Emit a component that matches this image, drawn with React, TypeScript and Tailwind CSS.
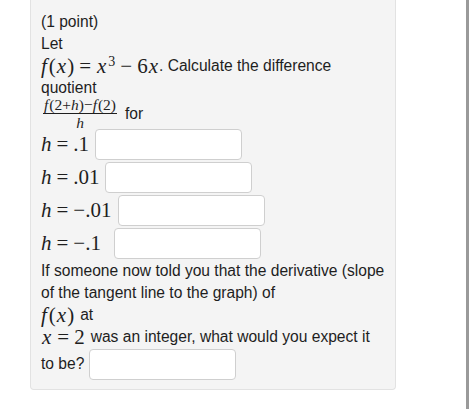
import React from "react";

const M = ({ children }: { children: React.ReactNode }) => (
  <span className="whitespace-nowrap font-['Liberation_Serif',serif] text-[21px] leading-none">{children}</span>
);
const I = ({ children }: { children: React.ReactNode }) => <i className="italic">{children}</i>;
const F = () => <i className="mr-[2px] italic">f</i>;
const X = () => <i className="mx-[1px] italic">x</i>;
const Op = ({ children }: { children: React.ReactNode }) => <span className="mx-[5px]">{children}</span>;

const Box = ({ className = "" }: { className?: string }) => (
  <div className={"h-[31px] w-[147px] shrink-0 rounded-[4px] border border-[#cfcfcf] bg-white " + className} />
);

export default function App() {
  return (
    <div className="flex h-[409px] w-[474px] bg-white font-['Liberation_Sans',Arial,sans-serif] text-[15.6px] text-[#1e1e1e]">
      <div className="ml-[30px] w-[366px] shrink-0 self-start">
        <div className="h-[390px] whitespace-nowrap rounded-b-[4px] border border-t-0 border-[#e2e2e2] bg-[#f4f4f4] px-[10px] pt-[11px]">
          <div className="h-[22px] leading-[22px]">(1 point)</div>
          <div className="h-[22px] leading-[22px]">Let</div>
          <div className="flex h-[22px] items-center leading-[22px]">
            <M>
              <F />(<X />)<Op>=</Op>
              <X />
              <sup className="ml-[1px] text-[14px]">3</sup>
              <Op>−</Op>6<X />
            </M>
            <span>. Calculate the difference</span>
          </div>
          <div className="h-[22px] leading-[22px]">quotient</div>
          <div className="flex h-[29px] items-center">
            <div className="ml-[2px] flex flex-col items-center font-['Liberation_Serif',serif] text-[15.5px] leading-[13px]">
              <span className="px-[1px] pb-[2px]">
                <i className="mr-[1px] italic">f</i>(2+<I>h</I>)−<i className="mr-[1px] italic">f</i>(2)
              </span>
              <span className="h-px w-full bg-[#1e1e1e]" />
              <span className="pt-[2px]">
                <I>h</I>
              </span>
            </div>
            <span className="ml-[8px]">for</span>
          </div>
          <div className="flex h-[33px] items-center">
            <M>
              <I>h</I>
              <Op>=</Op>.1
            </M>
            <Box className="ml-[6px]" />
          </div>
          <div className="flex h-[33px] items-center">
            <M>
              <I>h</I>
              <Op>=</Op>.01
            </M>
            <Box className="ml-[5px]" />
          </div>
          <div className="flex h-[33px] items-center">
            <M>
              <I>h</I>
              <Op>=</Op>−.01
            </M>
            <Box className="ml-[7px]" />
          </div>
          <div className="flex h-[33px] items-center">
            <M>
              <I>h</I>
              <Op>=</Op>−.1
            </M>
            <Box className="ml-[13px]" />
          </div>
          <div className="h-[22px] leading-[22px]">If someone now told you that the derivative (slope</div>
          <div className="h-[22px] leading-[22px]">of the tangent line to the graph) of</div>
          <div className="flex h-[22px] items-center">
            <M>
              <F />(<X />)
            </M>
            <span className="ml-[6px]">at</span>
          </div>
          <div className="flex h-[22px] items-center">
            <M>
              <X />
              <Op>=</Op>2
            </M>
            <span className="ml-[6px]">was an integer, what would you expect it</span>
          </div>
          <div className="flex h-[32px] items-center">
            <span>to be?</span>
            <Box className="ml-[5px]" />
          </div>
        </div>
      </div>
      <div className="ml-[70px] h-full w-[3px] shrink-0 bg-[#9a9a9a]" />
    </div>
  );
}
